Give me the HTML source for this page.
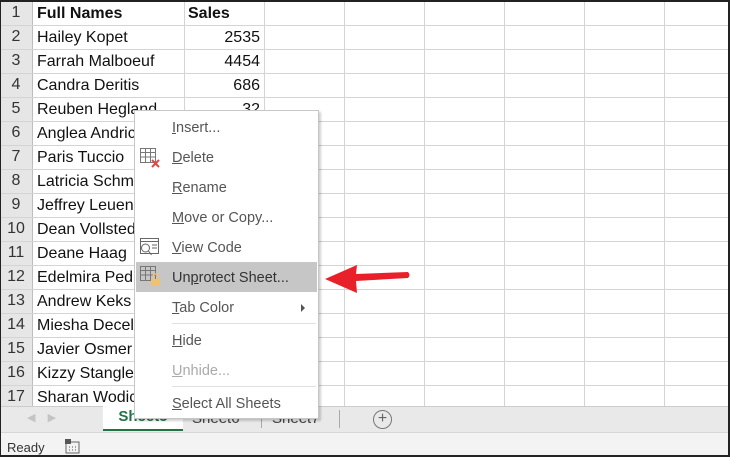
<!DOCTYPE html>
<html><head><meta charset="utf-8"><style>
*{margin:0;padding:0;box-sizing:border-box}
body{width:730px;height:457px;overflow:hidden;background:#fff;font-family:"Liberation Sans",sans-serif;position:relative}
.frame{position:absolute;inset:0;border:1px solid #222;border-width:2px 2px 2px 1px;pointer-events:none;z-index:20}
.hl{position:absolute;left:0;width:730px;height:1px;background:#d4d4d4}
.vl{position:absolute;top:0;width:1px;height:406px;background:#d4d4d4}
.rh{position:absolute;left:0;top:0;width:33px;height:406px;background:#e6e6e6;border-right:1px solid #bdbdbd}
.rn{position:absolute;left:0;width:32px;text-align:center;font-size:16px;color:#333}
.c{position:absolute;font-size:16px;color:#111;white-space:nowrap}
.menu{position:absolute;left:134px;top:110px;width:185px;height:309px;background:#fff;border:1px solid #c6c6c6;box-shadow:2px 2px 2px rgba(0,0,0,.18);z-index:10}
.mi{position:absolute;left:37px;font-size:14.5px;color:#555;white-space:nowrap}
.mi u{text-decoration:underline}
.sep{position:absolute;left:37px;right:2px;height:1px;background:#e0e0e0}
</style></head><body>
<div class="rh"></div>
<div class="hl" style="top:25px"></div><div class="hl" style="top:49px"></div><div class="hl" style="top:73px"></div><div class="hl" style="top:97px"></div><div class="hl" style="top:121px"></div><div class="hl" style="top:145px"></div><div class="hl" style="top:169px"></div><div class="hl" style="top:193px"></div><div class="hl" style="top:217px"></div><div class="hl" style="top:241px"></div><div class="hl" style="top:265px"></div><div class="hl" style="top:289px"></div><div class="hl" style="top:313px"></div><div class="hl" style="top:337px"></div><div class="hl" style="top:361px"></div><div class="hl" style="top:385px"></div>
<div class="vl" style="left:184px"></div><div class="vl" style="left:264px"></div><div class="vl" style="left:344px"></div><div class="vl" style="left:424px"></div><div class="vl" style="left:504px"></div><div class="vl" style="left:584px"></div><div class="vl" style="left:664px"></div>
<div style="position:absolute;left:184px;top:0;width:81px;height:2px;background:#217346"></div>

<div class="rn" style="top:4px">1</div><div class="rn" style="top:28px">2</div><div class="rn" style="top:52px">3</div><div class="rn" style="top:76px">4</div><div class="rn" style="top:100px">5</div><div class="rn" style="top:124px">6</div><div class="rn" style="top:148px">7</div><div class="rn" style="top:172px">8</div><div class="rn" style="top:196px">9</div><div class="rn" style="top:220px">10</div><div class="rn" style="top:244px">11</div><div class="rn" style="top:268px">12</div><div class="rn" style="top:292px">13</div><div class="rn" style="top:316px">14</div><div class="rn" style="top:340px">15</div><div class="rn" style="top:364px">16</div><div class="rn" style="top:388px">17</div>

<div class="c" style="left:37px;top:5px;font-weight:bold">Full Names</div><div class="c" style="left:188px;top:5px;font-weight:bold">Sales</div>
<div class="c" style="left:37px;top:29px">Hailey Kopet</div><div class="c" style="left:188px;top:29px;width:72px;text-align:right">2535</div>
<div class="c" style="left:37px;top:53px">Farrah Malboeuf</div><div class="c" style="left:188px;top:53px;width:72px;text-align:right">4454</div>
<div class="c" style="left:37px;top:77px">Candra Deritis</div><div class="c" style="left:188px;top:77px;width:72px;text-align:right">686</div>
<div class="c" style="left:37px;top:101px">Reuben Hegland</div><div class="c" style="left:188px;top:101px;width:72px;text-align:right">32</div>
<div class="c" style="left:37px;top:125px">Anglea Andric</div>
<div class="c" style="left:37px;top:149px">Paris Tuccio</div>
<div class="c" style="left:37px;top:173px">Latricia Schmidt</div>
<div class="c" style="left:37px;top:197px">Jeffrey Leuenberger</div>
<div class="c" style="left:37px;top:221px">Dean Vollstedt</div>
<div class="c" style="left:37px;top:245px">Deane Haag</div>
<div class="c" style="left:37px;top:269px">Edelmira Pedro</div>
<div class="c" style="left:37px;top:293px">Andrew Keks</div>
<div class="c" style="left:37px;top:317px">Miesha Decelles</div>
<div class="c" style="left:37px;top:341px">Javier Osmer</div>
<div class="c" style="left:37px;top:365px">Kizzy Stangle</div>
<div class="c" style="left:37px;top:389px">Sharan Wodicka</div>

<div style="position:absolute;left:0;top:406px;width:730px;height:26px;background:#e9e9e9;border-top:1px solid #ccc"></div>
<div style="position:absolute;left:27px;top:411px;color:#c4c4c4;font-size:11px">◀&nbsp;&nbsp;&nbsp;&nbsp;▶</div>
<div style="position:absolute;left:103px;top:406px;width:80px;height:25px;background:#fff;border-bottom:2px solid #217346;color:#217346;font-weight:bold;font-size:15px;text-align:center;line-height:22px">Sheet5</div>
<div style="position:absolute;left:192px;top:410px;font-size:15px;color:#444">Sheet6</div>
<div style="position:absolute;left:261px;top:410px;width:1px;height:18px;background:#aaa"></div>
<div style="position:absolute;left:272px;top:410px;font-size:15px;color:#444">Sheet7</div>
<div style="position:absolute;left:339px;top:410px;width:1px;height:18px;background:#aaa"></div>
<div style="position:absolute;left:373px;top:410px;width:19px;height:19px;border:1px solid #777;border-radius:50%;color:#666;font-size:16px;line-height:16px;text-align:center">+</div>
<div style="position:absolute;left:0;top:432px;width:730px;height:25px;background:#f3f3f3;border-top:1px solid #d6d6d6"></div>
<div style="position:absolute;left:7px;top:440px;font-size:13px;color:#333">Ready</div>
<svg style="position:absolute;left:64px;top:438px" width="16" height="16"><rect x="2" y="4" width="13" height="11" fill="none" stroke="#666"/><rect x="1" y="1" width="6" height="5" fill="#555"/><path d="M5 9h1M8 9h1M11 9h1M5 12h1M8 12h1M11 12h1" stroke="#555"/></svg>

<div class="menu">
<div style="position:absolute;left:1px;top:151px;width:181px;height:30px;background:#c6c6c6"></div>
<div class="mi" style="top:9px"><u>I</u>nsert...</div>
<svg style="position:absolute;left:4px;top:36px" width="24" height="24"><g fill="none" stroke="#777"><rect x="1.5" y="1.5" width="15" height="14"/><path d="M1.5 5.5h15M1.5 10h15M6.5 1.5v14M11.5 1.5v14"/></g><path d="M13 13l7 7M20 13l-7 7" stroke="#e04848" stroke-width="2"/></svg>
<div class="mi" style="top:39px"><u>D</u>elete</div>
<div class="mi" style="top:69px"><u>R</u>ename</div>
<div class="mi" style="top:99px"><u>M</u>ove or Copy...</div>
<svg style="position:absolute;left:4px;top:126px" width="24" height="22"><g fill="none" stroke="#666"><rect x="1.5" y="1.5" width="18" height="15"/><path d="M1.5 4.5h18M13 8h5M13 11h5"/><circle cx="6.5" cy="11" r="4"/><path d="M9.5 14l3 4"/></g></svg>
<div class="mi" style="top:129px"><u>V</u>iew Code</div>
<svg style="position:absolute;left:4px;top:154px" width="24" height="24"><g fill="none" stroke="#777"><rect x="1.5" y="1.5" width="15" height="14"/><path d="M1.5 5.5h15M1.5 10h15M6.5 1.5v14M11.5 1.5v14"/></g><rect x="12" y="14" width="9" height="7" fill="#f1c070"/><path d="M14 14v-2.5a2.5 2.5 0 0 1 5 0V14" fill="none" stroke="#f1c070" stroke-width="1.5"/></svg>
<div class="mi" style="top:159px;color:#333">Un<u>p</u>rotect Sheet...</div>
<div class="mi" style="top:189px"><u>T</u>ab Color</div>
<div style="position:absolute;left:166px;top:193px;width:0;height:0;border-left:4px solid #555;border-top:4px solid transparent;border-bottom:4px solid transparent"></div>
<div class="sep" style="top:212px"></div>
<div class="mi" style="top:222px"><u>H</u>ide</div>
<div class="mi" style="top:252px;color:#aaa"><u>U</u>nhide...</div>
<div class="sep" style="top:275px"></div>
<div class="mi" style="top:285px"><u>S</u>elect All Sheets</div>
</div>

<svg style="position:absolute;left:320px;top:262px;z-index:11" width="95" height="34"><path d="M5 17L37 3L36 12L88 10Q91 13 88 16L36 19L37 31Z" fill="#e8202a"/></svg>
<div class="frame"></div>
</body></html>
